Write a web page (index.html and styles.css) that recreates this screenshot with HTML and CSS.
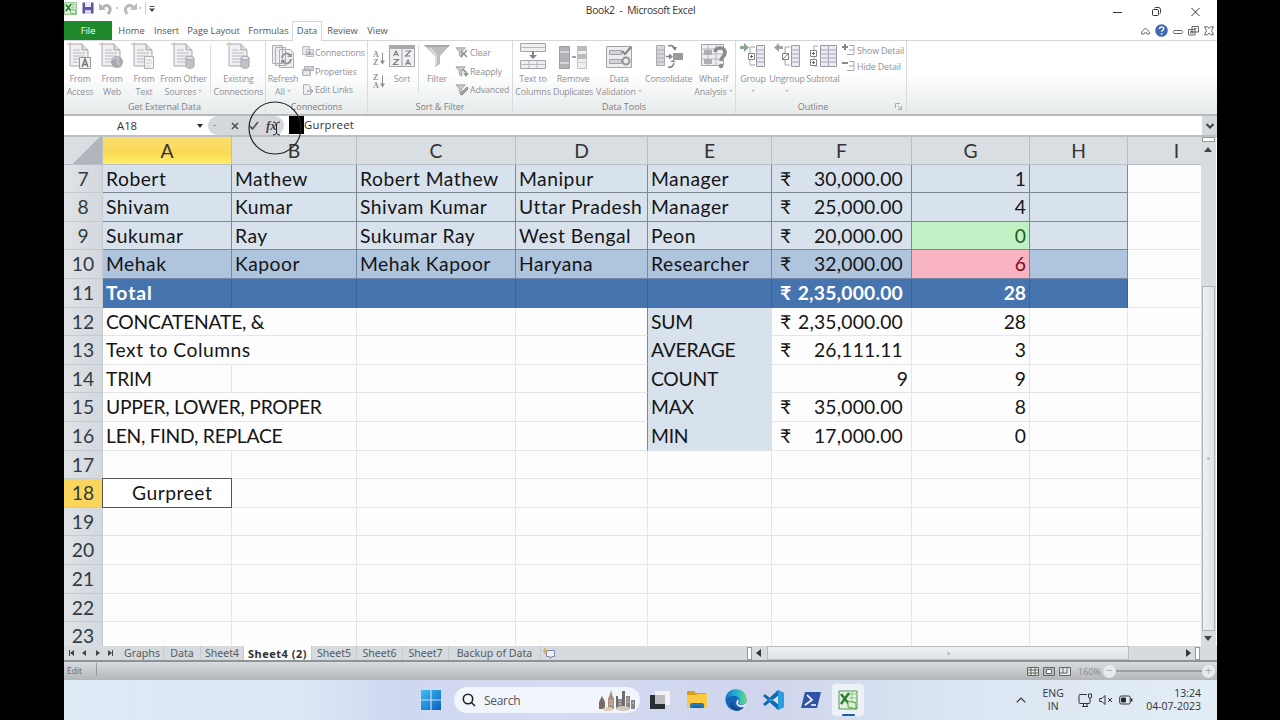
FILE: index.html
```
<!DOCTYPE html>
<html lang="en">
<head>
  <meta charset="UTF-8" />
  <meta name="viewport" content="width=device-width, initial-scale=1" />
  <title>Book2 - Microsoft Excel</title>
  <link rel="stylesheet" href="styles.css">
</head>
<body>
  <!-- shared icons -->
  <svg width="0" height="0" class="defs">
    <symbol id="doc" viewBox="0 0 26 28">
      <path d="M3 2h12l6 6v16H3z" fill="#f1f0f2" stroke="#aaa7ae"/>
      <path d="M15 2v6h6" fill="#dcdadf" stroke="#aaa7ae"/>
      <path d="M6 8h7M6 11h12M6 14h12M6 17h9M6 20h9" stroke="#bcb8c2"/>
      <path d="M0 3l3-2 3 2" fill="none" stroke="#d9c9b4" stroke-width="1.5"/>
    </symbol>
    <symbol id="cyl" viewBox="0 0 10 14">
      <path d="M1 3v8c0 3 8 3 8 0V3z" fill="#c4c2c8" stroke="#a5a2aa"/>
      <ellipse cx="5" cy="3" rx="4" ry="2" fill="#e2e0e5" stroke="#a5a2aa"/>
    </symbol>
    <symbol id="funnel" viewBox="0 0 14 14">
      <path d="M1 1.5h11L8 6v6.500l-3-2V6z" fill="#c9c8cc" stroke="#9d9ba1"/>
    </symbol>
    <symbol id="excel" viewBox="0 0 20 20">
      <path d="M1 1h18v18H1z" fill="#e4f2df" stroke="#4f9a4c"/>
      <path d="M11 4h7M11 8h7M11 12h7M14 2v17" stroke="#91c489"/>
      <path d="M3 4l8 10M11 3L3 14" stroke="#2c7f35" stroke-width="2.600"/>
      <path d="M10 11l8 2v6l-8-2z" fill="#d8f0cf" stroke="#56a452"/>
    </symbol>
  </svg>

  <div class="window">
    <div class="titlebar">
      <div class="quick">
        <svg width="13" height="13"><use href="#excel"/></svg>
        <svg width="12" height="12" viewBox="0 0 12 12"><path d="M.5.5h11v11H.5z" fill="#5b55a5"/><path d="M3 0h6v5H3z" fill="#eceaf7"/><path d="M3 8h6v4H3z" fill="#d6d3ea"/></svg>
        <svg width="15" height="13" viewBox="0 0 15 13"><path d="M4 5c5-4 10 1 5 7" fill="none" stroke="#b1b3b6" stroke-width="3"/><path d="M0 1v7h7z" fill="#b1b3b6"/></svg>
        <i class="dot"></i>
        <svg width="15" height="13" viewBox="0 0 15 13"><path d="M11 5C6 1 1 6 5 12" fill="none" stroke="#b9bbbe" stroke-width="3"/><path d="M15 1v7H8z" fill="#b9bbbe"/></svg>
        <i class="dot"></i>
        <span class="more"><svg width="6" height="6" viewBox="0 0 6 6"><path d="M.5.5h5" stroke="#555"/><path d="M0 2.500h6L3 6z" fill="#444"/></svg></span>
      </div>
      <div class="title">Book2 &nbsp;-&nbsp; Microsoft Excel</div>
      <div class="controls">
        <svg width="9" height="10" viewBox="0 0 9 10"><path d="M0 5.500h9" stroke="#333"/></svg>
        <svg width="9" height="10" viewBox="0 0 9 10" fill="none" stroke="#333"><path d="M.5 3.500q0-1 1-1h4q1 0 1 1v4q0 1-1 1h-4q-1 0-1-1zM2.500 1q.3-.5 1-.5h3q2 0 2 2v3q0 1-.8 1.300"/></svg>
        <svg width="9" height="10" viewBox="0 0 9 10"><path d="M.5 1l8 8M8.500 1l-8 8" stroke="#333"/></svg>
      </div>
    </div>

    <div class="tabs">
      <div class="file">File</div>
      <div class="tab home">Home</div>
      <div class="tab insert">Insert</div>
      <div class="tab layout">Page Layout</div>
      <div class="tab formulas">Formulas</div>
      <div class="tab active">Data</div>
      <div class="tab review">Review</div>
      <div class="tab view">View</div>
      <div class="help">
        <svg width="9" height="8" viewBox="0 0 9 8" fill="none" stroke="#666"><path d="M.7 5L4.500 1l3.800 4v2H6L4.500 5 3 7H.7z"/></svg>
        <svg width="13" height="13" viewBox="0 0 13 13"><circle cx="6.500" cy="6.500" r="6.300" fill="#3f68b5"/><path d="M4.500 5c0-3 4.200-2.600 4.200-.3 0 1.500-2.100 1.500-2.100 3.100" fill="none" stroke="#fff" stroke-width="1.400"/><circle cx="6.600" cy="9.800" r=".9" fill="#fff"/></svg>
        <svg width="10" height="8" viewBox="0 0 10 8"><rect x=".5" y="3.500" width="9" height="3" rx="1" fill="none" stroke="#666"/></svg>
        <svg width="11" height="10" viewBox="0 0 11 10" fill="#fff" stroke="#666"><path d="M4 .5h6.500v5.500H4zM.5 3.500H7v5.500H.5zM2.500 5.500h2.500v1.500H2.500zM6 2.500h2.500"/></svg>
        <svg width="10" height="10" viewBox="0 0 10 10" fill="none" stroke="#666"><path d="M.5.800h3L5 2.500 6.500.8h3L7.500 4.800l2 4h-3L5 7 3.500 8.800h-3l2-4z"/></svg>
      </div>
    </div>

    <div class="ribbon">
      <div class="group get">
        <div class="items">
          <div class="btn w32"><svg width="26" height="28"><use href="#doc"/><path d="M12.500 15.500h11v11h-11z" fill="#f2f2f3" stroke="#98959c"/><path d="M15 25l3-8 3 8M16 22.500h4" fill="none" stroke="#77747b" stroke-width="1.500"/></svg>From<br>Access</div>
          <div class="btn w32"><svg width="26" height="28"><use href="#doc"/><circle cx="18" cy="20" r="6" fill="#aaa8ae"/><path d="M14 18q3-4 6-1l-2 3 3 3" fill="none" stroke="#c9c7cd" stroke-width="1.500"/></svg>From<br>Web</div>
          <div class="btn w32"><svg width="26" height="28"><use href="#doc"/><path d="M13.500 14.500h9v12h-9z" fill="#f5f4f6" stroke="#b1aeb6"/><path d="M15 18h6M15 21h6M15 24h4" stroke="#ccc"/></svg>From<br>Text</div>
          <div class="btn w47"><svg width="26" height="28"><use href="#doc"/><use href="#cyl" x="14" y="13" width="10" height="14"/></svg>From Other<br>Sources <b></b></div>
          <i class="sep"></i>
          <div class="btn w53"><svg width="26" height="28"><use href="#doc"/><use href="#cyl" x="14" y="13" width="10" height="14"/></svg>Existing<br>Connections</div>
        </div>
        <div class="name">Get External Data</div>
      </div>

      <div class="group conn">
        <div class="items">
          <div class="btn w34"><svg width="26" height="28" viewBox="0 0 26 28"><path d="M2.500 3.500h10v18h-10zM5.500 5.500h10v18h-10zM9.500 7.500h11l3 3v15h-14z" fill="#eeedf0" stroke="#b1aeb6"/><path d="M12 16c1-6 7-5 8-2M21 17c-1 6-7 5-8 2" fill="none" stroke="#96949a" stroke-width="2"/><path d="M22 11v4h-5zM11 22v-4h5z" fill="#96949a"/></svg>Refresh<br>All <b></b></div>
          <div class="list">
            <div><svg width="12" height="12" viewBox="0 0 12 12" fill="#e9e8eb" stroke="#bbb8c0"><path d="M.5.500h7v8h-7zM4.500 3.500h7v7h-7z"/><path d="M6 6v3M8 5v4M10 7v2" stroke="#8f8c94"/></svg>Connections</div>
            <div><svg width="12" height="12" viewBox="0 0 12 12" fill="#d2d1d4" stroke="#b4b2b8"><path d="M2.500 1.500h9v4h-9zM.5 4.500h8v6h-8z"/><path d="M2 7h5M2 9h5" stroke="#fff"/></svg>Properties</div>
            <div><svg width="12" height="12" viewBox="0 0 12 12" fill="#eeedf0" stroke="#b4b2b8"><path d="M1.500.500h5l2 2v8h-7z"/><path d="M5 7h5M8 5l3 2-3 3" stroke="#8f8c94"/></svg>Edit Links</div>
          </div>
        </div>
        <div class="name">Connections</div>
      </div>

      <div class="group sort">
        <div class="items">
          <div class="az">
            <div><span>A<br>Z</span><svg width="5" height="13" viewBox="0 0 5 12"><path d="M2.500 0v9" stroke="#8e8e90"/><path d="M0 8h5l-2.500 4z" fill="#8e8e90"/></svg></div>
            <div><span>Z<br>A</span><svg width="5" height="13" viewBox="0 0 5 12"><path d="M2.500 0v9" stroke="#8e8e90"/><path d="M0 8h5l-2.500 4z" fill="#8e8e90"/></svg></div>
          </div>
          <div class="btn w30"><svg width="26" height="28" viewBox="0 0 26 28"><path d="M.5 3.500h25v21H.5z" fill="#f0eff1" stroke="#a5a2aa"/><path d="M0 3h26v4H0z" fill="#aaa7ad"/><path d="M13 7v18" stroke="#a5a2aa"/><path d="M4.500 14L7 9l2.500 5M5 12.500h4M4.500 17.500h5l-5 5h5M16.500 9h5l-5 5h5M16.500 23l2.500-5 2.500 5M17 21.500h4" fill="none" stroke="#837f87" stroke-width="1.200"/></svg>Sort</div>
          <i class="sep"></i>
          <div class="btn w32"><svg width="28" height="28" viewBox="0 0 28 28"><path d="M1 3h26L17 14v8l-5 3V14z" fill="#bdbcbf"/><path d="M1 3h26l-2 2H3z" fill="#a9a8ac"/><path d="M7 6l6 7v10" fill="none" stroke="#dcdbde" stroke-width="2"/></svg>Filter</div>
          <div class="list">
            <div><svg width="14" height="13" viewBox="0 0 14 13"><use href="#funnel" width="12" height="13"/><path d="M6 5l6 6M12 4l-6 7" stroke="#8f8d92" stroke-width="1.500"/></svg>Clear</div>
            <div><svg width="14" height="13" viewBox="0 0 14 13"><use href="#funnel" width="12" height="13"/><path d="M7 5c3 0 5 2 4 6" fill="none" stroke="#8ba292" stroke-width="2"/><path d="M8 8h6l-3 4z" fill="#8ba292"/></svg>Reapply</div>
            <div><svg width="14" height="13" viewBox="0 0 14 13"><use href="#funnel" width="12" height="13"/><path d="M5 11l7-7 1 2-6 6z" fill="#aaa8ac" stroke="#858388"/></svg>Advanced</div>
          </div>
        </div>
        <div class="name">Sort &amp; Filter</div>
      </div>

      <div class="group tools">
        <div class="items">
          <div class="btn w40"><svg width="28" height="28" viewBox="0 0 28 28"><path d="M1.500 1.500h25v8h-25zM1.500 18.500h25v8h-25z" fill="#efeef0" stroke="#a5a2aa"/><path d="M1 5.500h26M1 22.500h26M10 18v8M18 18v8" stroke="#b9b6be"/><path d="M14 9v5" stroke="#858388" stroke-width="2"/><path d="M10 13h8l-4 4z" fill="#858388"/></svg>Text to<br>Columns</div>
          <div class="btn w40"><svg width="28" height="28" viewBox="0 0 28 28"><path d="M.5 4.500h10v22H.5z" fill="#b3b1b5" stroke="#a09ea3"/><path d="M1 10h9M1 21h9" stroke="#e4e3e6" stroke-width="1.500"/><path d="M13 15h4" stroke="#888" stroke-width="1.500"/><path d="M18.500 4.500h9v22h-9z" fill="#efeef0" stroke="#c3c1c6"/><path d="M18 4h10v5H18zM18 12h10v5H18z" fill="#bdbbc0"/><path d="M18 20.500h10" stroke="#ccc"/></svg>Remove<br><span class="dup">Duplicates</span></div>
          <div class="btn w52"><svg width="28" height="28" viewBox="0 0 28 28"><path d="M1.500 4.500h25v21h-25z" fill="#edecef" stroke="#a5a2aa"/><path d="M4.500 8.500h12v4h-12zM4.500 17.500h12v4h-12z" fill="#d5d3d8" stroke="#a5a2aa"/><path d="M17 9l3 3 6-7" fill="none" stroke="#838187" stroke-width="2"/><circle cx="21" cy="19" r="3.500" fill="none" stroke="#96949a" stroke-width="2"/></svg><span>Data<br>Validation <b></b></span></div>
          <div class="btn w47"><svg width="28" height="28" viewBox="0 0 28 28"><path d="M1.500 3.500h8v20h-8z" fill="#d9d8dc" stroke="#aaa8ae"/><path d="M1 8h9M1 12h9M1 16h9M1 20h9" stroke="#aaa8ae"/><path d="M18 11h10v7H18z" fill="#9a999d"/><path d="M11 14.500h5M13 4q5-2 7 3M13 25q5 1 6-4" fill="none" stroke="#858388" stroke-width="1.500"/><path d="M14 11.500l4 3-4 3zM17 5h5l-2 4zM15 20h6l-3-2z" fill="#858388"/></svg>Consolidate</div>
          <div class="btn w43"><svg width="28" height="28" viewBox="0 0 28 28"><path d="M1.500 2.500h22v21h-22z" fill="#efeef0" stroke="#a5a2aa"/><path d="M1 7h23M1 12h23M1 17h23M8 2v22M16 2v22" stroke="#b9b6be"/><path d="M4 8h8v5H4zM4 17h8v5H4z" fill="#b0aeb3"/><path d="M15 10c1-6 11-5 10 1 0 4-4 3-4 8" fill="none" stroke="#8c8a8f" stroke-width="3.500"/><circle cx="21" cy="24" r="2.200" fill="#8c8a8f"/></svg><span>What-If<br>Analysis <b></b></span></div>
        </div>
        <div class="name">Data Tools</div>
      </div>

      <div class="group outline">
        <div class="items">
          <div class="btn w32"><svg width="26" height="28" viewBox="0 0 26 28"><path d="M16.500 3.500h8v21h-8z" fill="#eceaf2" stroke="#9a98a5"/><path d="M16 8h9M16 12h9M16 16h9M16 20h9M15 5h-5v18h5" fill="none" stroke="#a7a5b2"/><path d="M8.500 11.500h6v6h-6z" fill="#fff" stroke="#858388"/><path d="M10 14.500h3M11.500 13v3" stroke="#666"/><path d="M0 4h4V1l5 4.500L4 10V7H0z" fill="#8fa78c"/></svg>Group<br><b></b></div>
          <div class="btn w36"><svg width="26" height="28" viewBox="0 0 26 28"><path d="M17.500 3.500h8v21h-8z" fill="#eceaf2" stroke="#9a98a5"/><path d="M17 8h9M17 12h9M17 16h9M17 20h9M16 5h-5v18h5" fill="none" stroke="#a7a5b2"/><path d="M8.500 11.500h6v6h-6zM8 18l7-7" fill="#fff" stroke="#858388"/><path d="M9 4H5V1L0 5.500 5 10V7h4z" fill="#9aa69a"/></svg>Ungroup<br><b></b></div>
          <div class="btn w36"><svg width="28" height="28" viewBox="0 0 28 28"><path d="M11.500 3.500h16v21h-16z" fill="#eceaf2" stroke="#9a98a5"/><path d="M11 8h17M11 12h17M11 16h17M11 20h17M19.500 3v22M9 4H5v20h4" fill="none" stroke="#a7a5b2"/><path d="M1.500 8.500h6v6h-6zM1.500 17.500h6v6h-6z" fill="#fff" stroke="#858388"/><path d="M3 11.500h3M4.500 10v3M3 20.500h3M4.500 19v3" stroke="#666"/></svg>Subtotal</div>
          <div class="list tight">
            <div><svg width="14" height="12" viewBox="0 0 14 12" fill="none" stroke="#a7a5aa"><path d="M0 3h6M3 0v6" stroke="#8a888d" stroke-width="2"/><path d="M7 1.500h5v9H5M7 6h5"/></svg>Show Detail</div>
            <div><svg width="14" height="12" viewBox="0 0 14 12" fill="none" stroke="#a7a5aa"><path d="M0 3h6" stroke="#8a888d" stroke-width="2"/><path d="M7 1.500h5v9H5M7 6h5"/></svg>Hide Detail</div>
          </div>
        </div>
        <div class="name">Outline<svg class="launch" width="7" height="7" viewBox="0 0 7 7" fill="none" stroke="#aaa"><path d="M.5 5V.500H5M3 3l3 3M6.500 3v3.500H3"/></svg></div>
      </div>
    </div>

    <div class="formula">
      <div class="namebox"><span>A18</span><svg width="6" height="4" viewBox="0 0 6 4"><path d="M0 0h6L3 4z" fill="#333"/></svg></div>
      <div class="fx">
        <i></i>
        <svg width="8" height="8" viewBox="0 0 8 8"><path d="M1 1l6 6M7 1L1 7" stroke="#555" stroke-width="1.700"/></svg>
        <svg width="10" height="9" viewBox="0 0 10 9"><path d="M1 5l2.500 3L9 1" fill="none" stroke="#555" stroke-width="1.700"/></svg>
        <em>fx</em>
      </div>
      <div class="value"><span class="sel"></span>Gurpreet</div>
      <div class="expand"><svg width="8" height="6" viewBox="0 0 8 6"><path d="M.5 1L4 4.500 7.500 1" fill="none" stroke="#444" stroke-width="2"/></svg></div>
    </div>

    <div class="sheet">
      <div class="grid">
        <div class="row head"><div class="corner"></div><div class="on">A</div><div>B</div><div>C</div><div>D</div><div>E</div><div>F</div><div>G</div><div>H</div><div>I</div></div>
        <div class="row light"><div>7</div><div>Robert</div><div>Mathew</div><div>Robert Mathew</div><div>Manipur</div><div>Manager</div><div class="money"><span>₹</span>30,000.00</div><div class="num">1</div><div></div><div></div></div>
        <div class="row light"><div>8</div><div>Shivam</div><div>Kumar</div><div>Shivam Kumar</div><div>Uttar Pradesh</div><div>Manager</div><div class="money"><span>₹</span>25,000.00</div><div class="num">4</div><div></div><div></div></div>
        <div class="row light"><div>9</div><div>Sukumar</div><div>Ray</div><div>Sukumar Ray</div><div>West Bengal</div><div>Peon</div><div class="money"><span>₹</span>20,000.00</div><div class="num good">0</div><div></div><div></div></div>
        <div class="row mid"><div>10</div><div>Mehak</div><div>Kapoor</div><div>Mehak Kapoor</div><div>Haryana</div><div>Researcher</div><div class="money"><span>₹</span>32,000.00</div><div class="num bad">6</div><div></div><div></div></div>
        <div class="row total"><div>11</div><div>Total</div><div></div><div></div><div></div><div></div><div class="money"><span>₹</span>2,35,000.00</div><div class="num">28</div><div></div><div></div></div>
        <div class="row"><div>12</div><div class="spill caps">CONCATENATE, &amp;</div><div></div><div></div><div class="edge"></div><div class="fn">SUM</div><div class="money"><span>₹</span>2,35,000.00</div><div class="num">28</div><div></div><div></div></div>
        <div class="row"><div>13</div><div class="spill">Text to Columns</div><div></div><div></div><div class="edge"></div><div class="fn">AVERAGE</div><div class="money"><span>₹</span>26,111.11</div><div class="num">3</div><div></div><div></div></div>
        <div class="row"><div>14</div><div class="caps">TRIM</div><div></div><div></div><div class="edge"></div><div class="fn">COUNT</div><div class="num">9</div><div class="num">9</div><div></div><div></div></div>
        <div class="row"><div>15</div><div class="spill caps">UPPER, LOWER, PROPER</div><div></div><div></div><div class="edge"></div><div class="fn">MAX</div><div class="money"><span>₹</span>35,000.00</div><div class="num">8</div><div></div><div></div></div>
        <div class="row"><div>16</div><div class="spill caps">LEN, FIND, REPLACE</div><div></div><div></div><div class="edge"></div><div class="fn">MIN</div><div class="money"><span>₹</span>17,000.00</div><div class="num">0</div><div></div><div></div></div>
        <div class="row"><div>17</div><div></div><div></div><div></div><div></div><div></div><div></div><div></div><div></div><div></div></div>
        <div class="row"><div class="on">18</div><div class="editing">Gurpreet</div><div></div><div></div><div></div><div></div><div></div><div></div><div></div><div></div></div>
        <div class="row"><div>19</div><div></div><div></div><div></div><div></div><div></div><div></div><div></div><div></div><div></div></div>
        <div class="row"><div>20</div><div></div><div></div><div></div><div></div><div></div><div></div><div></div><div></div><div></div></div>
        <div class="row"><div>21</div><div></div><div></div><div></div><div></div><div></div><div></div><div></div><div></div><div></div></div>
        <div class="row"><div>22</div><div></div><div></div><div></div><div></div><div></div><div></div><div></div><div></div><div></div></div>
        <div class="row"><div>23</div><div></div><div></div><div></div><div></div><div></div><div></div><div></div><div></div><div></div></div>
      </div>
      <div class="vscroll">
        <i class="split"></i>
        <svg width="8" height="5" viewBox="0 0 8 5"><path d="M0 5h8L4 0z" fill="#444"/></svg>
        <div class="thumb"><i></i></div>
        <svg width="8" height="5" viewBox="0 0 8 5"><path d="M0 0h8L4 5z" fill="#444"/></svg>
      </div>
    </div>

    <div class="sheettabs">
      <div class="nav">
        <svg width="5" height="6" viewBox="0 0 5 6"><path d="M.5 0v6" stroke="#444"/><path d="M5 0v6L1 3z" fill="#444"/></svg>
        <svg width="5" height="6" viewBox="0 0 5 6"><path d="M4 0v6L0 3z" fill="#444"/></svg>
        <svg width="5" height="6" viewBox="0 0 5 6"><path d="M1 0v6l4-3z" fill="#444"/></svg>
        <svg width="5" height="6" viewBox="0 0 5 6"><path d="M4.500 0v6" stroke="#444"/><path d="M0 0v6l4-3z" fill="#444"/></svg>
      </div>
      <div class="st s1">Graphs</div>
      <div class="st s2">Data</div>
      <div class="st s3">Sheet4</div>
      <div class="st cur">Sheet4 (2)</div>
      <div class="st s5">Sheet5</div>
      <div class="st s6">Sheet6</div>
      <div class="st s7">Sheet7</div>
      <div class="st s8">Backup of Data</div>
      <div class="new"><svg width="12" height="11" viewBox="0 0 12 11"><path d="M3.500 2.500h8v6h-3l-1 2-1-2h-3z" fill="#eef1f9" stroke="#7d86a5"/><path d="M2 0v6M0 3h5" stroke="#d8ac52" stroke-width="1.500"/></svg></div>
      <div class="hscroll">
        <i class="split"></i>
        <svg width="5" height="8" viewBox="0 0 5 8"><path d="M5 0v8L0 4z" fill="#333"/></svg>
        <div class="thumb"><i></i></div>
        <svg class="right" width="5" height="8" viewBox="0 0 5 8"><path d="M0 0v8l5-4z" fill="#333"/></svg>
        <i class="split end"></i>
      </div>
    </div>

    <div class="status">
      <div class="mode">Edit</div>
      <div class="views">
        <svg width="12" height="9" viewBox="0 0 12 9" fill="#eceeea" stroke="#666"><path d="M.5.500h11v8H.5zM0 3h12M0 6h12M4 0v9M8 0v9"/></svg>
        <svg width="12" height="9" viewBox="0 0 12 9" fill="#b9bcbe" stroke="#666"><path d="M.5.500h11v8H.5z"/><path d="M3.500 2.500h5v4h-5z" fill="#fff"/></svg>
        <svg width="12" height="9" viewBox="0 0 12 9" fill="#e4e6e6" stroke="#666"><path d="M.5.500h11v8H.5zM4 0v6M8 0v6M0 6h8"/></svg>
        <span>160%</span>
        <div class="zoom"><i>−</i><hr><i>+</i></div>
      </div>
    </div>

    <div class="taskbar">
      <svg class="start" width="20" height="20" viewBox="0 0 20 20"><defs><linearGradient id="win" x2="1" y2="1"><stop stop-color="#3cc0f2"/><stop offset="1" stop-color="#0a5fc0"/></linearGradient></defs><path d="M0 0h9.400v9.400H0zM10.600 0H20v9.400h-9.400zM0 10.600h9.400V20H0zM10.600 10.600H20V20h-9.400z" fill="url(#win)"/></svg>
      <div class="search">
        <svg width="14" height="14" viewBox="0 0 14 14" fill="none" stroke="#222" stroke-width="1.600"><circle cx="6" cy="6" r="4.700"/><path d="M9.500 9.500L13 13"/></svg>
        <span>Search</span>
        <svg class="city" width="38" height="21" viewBox="0 0 38 21"><path d="M1 19v-7l3-6 3 6v7z" fill="#786b68"/><path d="M10 19V9l2-5 1-4 1 4 2 5v10z" fill="#a78f82"/><path d="M18 19V6h2v13zM24 19V1h3v18z" fill="#6e6b72"/><path d="M20 19V9h4v10zM28 19V6h4v13zM33 19v-9h4v9z" fill="#8b8582"/><path d="M11 11h4M11 14h4M21 11h2M21 14h2M29 9h2M29 12h2M34 13h2" stroke="#dbcbbd"/><ellipse cx="10" cy="19" rx="5" ry="2" fill="#ddcdbb"/><ellipse cx="25" cy="18.500" rx="7" ry="2.500" fill="#d5c9bd"/></svg>
      </div>
      <div class="apps">
        <svg width="20" height="20" viewBox="0 0 20 20"><path d="M5 1h15v14H5z" fill="#f3f3f5"/><path d="M0 5h15v14H0z" fill="#2a2d31"/><path d="M5 5h10v9H5z" fill="#babcbf"/></svg>
        <svg width="22" height="20" viewBox="0 0 22 20"><path d="M1 1h7l2 2h10v6H1z" fill="#dd9c1c"/><path d="M1 5h9l2-1h9v14H1z" fill="#fac940"/><path d="M4 18v-3q0-2 2-2h10q2 0 2 2v3z" fill="#2079b9"/><path d="M7 17h8" stroke="#155e98" stroke-width="1.500"/></svg>
        <svg width="22" height="22" viewBox="0 0 22 22"><defs><linearGradient id="edge" x2="1" y2="0"><stop stop-color="#1379c8"/><stop offset=".6" stop-color="#28b8cf"/><stop offset="1" stop-color="#63dc73"/></linearGradient></defs><circle cx="11" cy="11" r="10.500" fill="#1564b3"/><path d="M.5 10C1-3 22-3 21.500 11c-.3 5-6 5-8 3.500 3-4-.5-7.500-4-7.500C5 7 2 8 .5 12z" fill="url(#edge)"/><path d="M8 12c-1 7 6 9 11 6-1 1.500-4 4-8 4-6-2-7-7-3-10z" fill="#124d8c"/><path d="M13 10c2 4-1 4 .5 5.200 3 1.300 6 .3 7.500-1.500l1 4-3 .5c-7 1-10-4-6-8.200z" fill="#dbe4f1"/></svg>
        <svg width="22" height="20" viewBox="0 0 22 20"><path d="M15 0l6 3v14l-6 3L4 10z" fill="#218bce"/><path d="M15 5v10l-7-5z" fill="#d8ddf0"/><path d="M0 6l2-2 14 11v5zM0 14l2 2L16 5V0z" fill="#1269ad"/><path d="M15 0l6 3v14l-6 3z" fill="#2b9edf"/></svg>
        <svg width="20" height="16" viewBox="0 0 20 16"><path d="M4 0h16l-4 16H0z" fill="#3053a5"/><path d="M6 3l5 5-7 5M10 13h5" fill="none" stroke="#fff" stroke-width="1.700"/></svg>
        <div class="running"><svg width="20" height="20"><use href="#excel"/></svg><i></i></div>
      </div>
      <div class="tray">
        <svg width="10" height="6" viewBox="0 0 10 6"><path d="M.7 5.300L5 1l4.300 4.300" fill="none" stroke="#333" stroke-width="1.200"/></svg>
        <div class="lang">ENG<br>IN</div>
        <svg width="15" height="15" viewBox="0 0 15 15" fill="none" stroke="#333"><path d="M9 1.500H2q-1 0-1 1v7q0 1 1 1h9q1 0 1-1V7M4 13.500h6M5.500 11v2M9 11v2M10.500 1v3q0 1 1.500 1t1.500-1V1zM12 5v2"/></svg>
        <svg width="14" height="12" viewBox="0 0 14 12" fill="none" stroke="#333"><path d="M.7 4.500v3H3L6 10.500v-9L3 4.500zM9 4l4 4M13 4L9 8"/></svg>
        <svg width="14" height="10" viewBox="0 0 14 10" fill="none" stroke="#333"><rect x=".7" y="1" width="10.500" height="8" rx="1.500"/><path d="M2.500 3h4v4h-4z" fill="#222"/><path d="M12.500 3.500v3" stroke-width="2"/></svg>
        <div class="clock">13:24<br>04-07-2023</div>
      </div>
    </div>

    <!-- mouse highlight -->
    <svg class="cursor" width="54" height="54" viewBox="0 0 54 54" fill="none" stroke="#222"><circle cx="27" cy="27" r="26" stroke-width="1.200"/><path d="M25 21q3 0 3.500 2Q29 21 32 21M28.500 23v9M25 34q3 0 3.500-2Q29 34 32 34"/></svg>
  </div>
</body>
</html>
```
FILE: styles.css
```
* {
  box-sizing: border-box;
}
body {
  margin: 0;
  background: #000;
  font-family: "Open Sans", "Noto Sans", sans-serif;
  color: #333;
  overflow: hidden;
}
svg {
  display: block;
  flex: none;
}
.defs {
  position: absolute;
}
.window {
  position: relative;
  width: 1153px;
  height: 720px;
  margin-left: 64px;
  background: #fff;
  overflow: hidden;
}

/* title bar */
.titlebar {
  display: grid;
  grid-template-columns: 1fr auto 1fr;
  height: 21px;
  font-size: 10.300px;
  letter-spacing: -.3px;
  line-height: 21px;
}
.quick {
  display: flex;
  align-items: center;
  height: 16px;
  gap: 5px;
}
.dot {
  width: 2px;
  height: 2px;
  margin: 0 -1px 0 -3px;
  background: #ccc;
}
.more {
  border-left: 1px solid #ccc;
  padding: 4px 0 2px 3px;
}
.controls {
  display: flex;
  justify-content: flex-end;
  align-items: center;
  gap: 30px;
  padding: 2px 17px 0 0;
}

/* ribbon tabs */
.tabs {
  display: flex;
  height: 20px;
  font-size: 9.300px;
  line-height: 20px;
  color: #555;
  border-bottom: 1px solid #d4d7da;
}
.file {
  width: 48px;
  height: 19px;
  background: #1f8a2c;
  color: #fff;
  text-align: center;
}
.tab {
  text-align: center;
  white-space: nowrap;
}
.home { width: 39px; }
.insert { width: 31px; }
.layout { width: 63px; }
.formulas { width: 47px; }
.active {
  width: 30px;
  height: 20px;
  border: 1px solid #d4d7da;
  border-bottom: none;
  background: #fff;
  line-height: 18px;
}
.review { width: 41px; }
.view { width: 29px; }
.help {
  display: flex;
  align-items: center;
  gap: 5px;
  margin-left: auto;
  padding-right: 3px;
}

/* ribbon */
.ribbon {
  display: flex;
  height: 75px;
  font-size: 8.900px;
  letter-spacing: -.15px;
  color: #909195;
  background: linear-gradient(#fff 45%, #e6eaeb);
  border-bottom: 2px solid #b5b9bb;
}
.group {
  display: flex;
  flex-direction: column;
  border-right: 1px solid #d9dcde;
}
.get { width: 202px; }
.conn { width: 102px; }
.sort { width: 145px; }
.tools { width: 223px; }
.outline { width: 171px; }
.items {
  display: flex;
  height: 59px;
}
.name {
  position: relative;
  text-align: center;
  color: #7d8083;
  font-size: 9px;
  letter-spacing: -.05px;
  line-height: 14px;
}
.outline .name {
  padding-right: 16px;
}
.launch {
  position: absolute;
  right: 4px;
  top: 3px;
}
.btn {
  flex: none;
  text-align: center;
  white-space: nowrap;
  line-height: 13px;
}
.btn > svg {
  margin: 1px auto 2px;
}
.btn b {
  display: inline-block;
  border: 2px solid transparent;
  border-top-color: #bbb;
  border-bottom: none;
  vertical-align: 3px;
}
.dup {
  letter-spacing: -.35px;
}
.w30 { width: 30px; }
.w32 { width: 32px; }
.w34 { width: 34px; }
.w36 { width: 36px; }
.w40 { width: 40px; }
.w43 { width: 43px; }
.w47 { width: 47px; }
.w52 { width: 52px; }
.w53 { width: 51px; }
.outline .btn:first-child {
  margin-left: 1px;
}
.sep {
  width: 1px;
  height: 48px;
  margin: 4px 2px 0 1px;
  background: #dcdfe1;
}
.list {
  padding: 2px 0 0 2px;
}
.list div {
  display: flex;
  align-items: center;
  gap: 1px;
  height: 18.700px;
  white-space: nowrap;
}
.tight {
  padding: 1px 0 0 1px;
}
.tight div {
  height: 16px;
}
.az {
  width: 19px;
  padding: 6px 0 0 5px;
}
.az div {
  display: flex;
  align-items: center;
  gap: 1px;
  height: 23px;
  font: bold 8px/7.500px "Liberation Serif", serif;
}
.w47 + .sep {
  margin-left: 3px;
}

/* formula bar */
.formula {
  display: flex;
  height: 21px;
  font: 11.300px/17px "Open Sans", sans-serif;
  border-bottom: 2px solid #bdc0c3;
}
.namebox {
  display: flex;
  align-items: center;
  width: 144px;
  padding-right: 5px;
}
.namebox span {
  flex: 1;
  padding-left: 53px;
}
.fx {
  display: flex;
  align-items: center;
  gap: 10px;
  width: 76px;
  padding-left: 5px;
  background: #d4d8dc;
  border-radius: 10px;
}
.fx i {
  width: 3px;
  height: 1px;
  margin-right: 5px;
  background: #999;
}
.fx em {
  font: italic bold 13px/18px "Liberation Serif", serif;
  color: #444;
  margin-left: -3px;
}
.value {
  display: flex;
  flex: 1;
  padding-left: 5px;
  letter-spacing: .25px;
}
.sel {
  width: 15px;
  height: 18px;
  background: #000;
}
.expand {
  display: flex;
  align-items: center;
  justify-content: center;
  width: 15px;
  background: #d4d8dc;
}

/* cells */
.sheet {
  display: flex;
  height: 509px;
}
.grid {
  width: 1137px;
  overflow: hidden;
  background: #fdfdfd;
}
.row {
  display: grid;
  grid-template-columns: 39px 129px 125px 159px 132px 124px 140px 118px 98px 98px;
  grid-template-rows: 28.600px;
  height: 28.600px;
  font: 19.300px/28px Lato, "Noto Sans", sans-serif;
  color: #151515;
}
.row > div {
  padding-left: 3px;
  border-right: 1px solid #e3e5e7;
  border-bottom: 1px solid #e3e5e7;
  white-space: nowrap;
  letter-spacing: .5px;
}
.row > div:first-child {
  padding: 0;
  text-align: center;
  color: #333a40;
  background: linear-gradient(90deg, #dfe3e6, #d3d8de);
  border-color: #c5cad0;
  letter-spacing: 0;
}
.row.head {
  grid-template-rows: 27.600px;
  height: 27.600px;
}
.row.head > div {
  padding: 0;
  text-align: center;
  background: #d9dee3;
  border-color: #b9bec4;
  color: #333;
  letter-spacing: 0;
}
.row.head > .on {
  background: linear-gradient(#fadf70, #fbd955 60%, #fff06a);
}
.row > div.on:first-child {
  background: #f9d65b;
}
.row.head > .corner {
  background: linear-gradient(135deg, #d9dee3 55%, #b0b6bb 55%);
}
.row.light > div:nth-child(n+2):nth-child(-n+9) {
  background: #d8e2ed;
  border-color: #7f8995;
}
.row.mid > div:nth-child(n+2):nth-child(-n+9) {
  background: #afc4dd;
  border-color: #7489a5;
}
.row.total > div:nth-child(n+2):nth-child(-n+9) {
  background: #4674af;
  border-color: #3c6499;
  border-bottom-color: #4674af;
  color: #fff;
  font-weight: bold;
}
.row.total > div:nth-child(2) {
  letter-spacing: 1px;
}
.row > .caps,
.row > .fn {
  letter-spacing: -.25px;
}
.row > .num {
  text-align: right;
  padding-right: 3px;
  letter-spacing: 0;
}
.row > .money {
  display: flex;
  justify-content: space-between;
  padding: 0 8px 0 8px;
  letter-spacing: .2px;
}
.row.light > .good.good.good {
  background: #c1f0c5;
  color: #145f20;
}
.row.mid > .bad.bad.bad {
  background: #f8b4c1;
  color: #7c0a20;
}
.row > .fn {
  background: #d8e2ed;
  border-color: #d8e2ed;
}
.row > .edge {
  border-right-color: #7f8995;
}
.row > .spill {
  border-right-color: transparent;
}
.row > .editing {
  padding-left: 29px;
  border: 1px solid #555;
  margin: -1px 0 0 -1px;
  background: #fff;
}

/* scrollbars */
.vscroll {
  display: flex;
  flex-direction: column;
  align-items: center;
  width: 15px;
  padding-right: 1px;
  background: #d8dcdf;
}
.vscroll .split {
  width: 13px;
  height: 5px;
  margin-bottom: 5px;
  background: #fff;
  border: 1px solid #999;
}
.vscroll .thumb {
  display: flex;
  align-items: center;
  justify-content: center;
  width: 13px;
  height: 345px;
  margin: 134px 0 5px;
  background: linear-gradient(90deg, #eef1f3, #dfe3e6);
  border: 1px solid #b1b5b9;
}
.thumb i {
  width: 3px;
  height: 3px;
  border-radius: 2px;
  background: #b8bdc2;
}

/* sheet tabs */
.sheettabs {
  display: flex;
  height: 16px;
  font: 10.600px/15px "Noto Sans", sans-serif;
  color: #555b60;
  background: #d6dbe0;
  border-bottom: 2px solid #8e9396;
}
.nav {
  display: flex;
  align-items: center;
  gap: 8px;
  width: 57px;
  padding-left: 5px;
}
.st {
  text-align: center;
  white-space: nowrap;
  border-right: 1px solid #c5cacf;
}
.s1 { width: 43px; }
.s2 { width: 37px; }
.s3 { width: 43px; }
.cur {
  width: 68px;
  background: #fff;
  color: #333;
  font-weight: bold;
  font-size: 11px;
  letter-spacing: .5px;
}
.s5 { width: 45px; }
.s6 { width: 46px; }
.s7 { width: 46px; }
.s8 { width: 92px; }
.new {
  padding: 2px 0 0 2px;
}
.hscroll {
  display: flex;
  align-items: center;
  width: 470px;
  margin-left: auto;
}
.hscroll .split {
  width: 5px;
  height: 13px;
  margin-right: 4px;
  background: #fff;
  border: 1px solid #999;
}
.hscroll .thumb {
  display: flex;
  align-items: center;
  justify-content: center;
  width: 362px;
  height: 14px;
  margin-left: 6px;
  background: linear-gradient(#eef1f3, #dfe3e6);
  border: 1px solid #b9bdc1;
}
.right {
  margin-left: 57px;
}
.hscroll .end {
  margin: 0 0 0 4px;
}

/* status bar */
.status {
  display: flex;
  justify-content: space-between;
  height: 18px;
  font-size: 8.500px;
  line-height: 17px;
  color: #666;
  background: linear-gradient(#d8dcde, #b3b7ba);
}
.mode {
  width: 33px;
  height: 13px;
  margin-top: 1px;
  padding-left: 3px;
  line-height: 15px;
  border-right: 1px solid #999;
}
.views {
  display: flex;
  align-items: center;
  gap: 4px;
  padding-right: 2px;
}
.views span {
  margin: 0 -2px 0 3px;
  color: #888;
  font-size: 9px;
}
.zoom {
  display: flex;
  align-items: center;
}
.zoom i {
  width: 13px;
  height: 13px;
  border-radius: 50%;
  background: #e8eaeb;
  color: #aaa;
  font: 12px/12px "Open Sans", sans-serif;
  text-align: center;
}
.zoom hr {
  width: 86px;
  height: 2px;
  margin: 0;
  border: none;
  background: #9b9fa2;
}

/* taskbar */
.taskbar {
  display: flex;
  align-items: center;
  height: 40px;
  background: linear-gradient(90deg, #deebf5 0, #dce8f6 20%, #d0d7f0 29%, #d3dcf3 42%, #cfd5ec 60%, #dbe6f3 78%, #e2edf5);
}
.start {
  margin-left: 357px;
}
.search {
  display: flex;
  align-items: center;
  width: 186px;
  height: 26px;
  margin-left: 13px;
  padding-left: 8px;
  border-radius: 13px;
  background: #f1f5fc;
  font-size: 12px;
  letter-spacing: -.3px;
  color: #555;
}
.search span {
  margin-left: 8px;
}
.city {
  margin-left: auto;
  margin-right: 4px;
}
.apps {
  display: flex;
  align-items: center;
  margin-left: 10px;
  gap: 16.300px;
}
.running {
  position: relative;
  padding: 6px;
  margin-left: -5px;
  border-radius: 4px;
  background: #edf1f8;
}
.running i {
  position: absolute;
  left: 10px;
  bottom: 0;
  width: 13px;
  height: 2px;
  background: #1d5fae;
  border-radius: 1px;
}
.tray {
  display: flex;
  align-items: center;
  margin-left: auto;
  padding-right: 16px;
  font-size: 10.500px;
  line-height: 13px;
}
.lang {
  width: 30px;
  margin: 0 10px 0 12px;
  text-align: center;
}
.tray svg + svg {
  margin-left: 6px;
}
.clock {
  margin-left: 13px;
  text-align: right;
}

.cursor {
  position: absolute;
  left: 184px;
  top: 101px;
}
```
